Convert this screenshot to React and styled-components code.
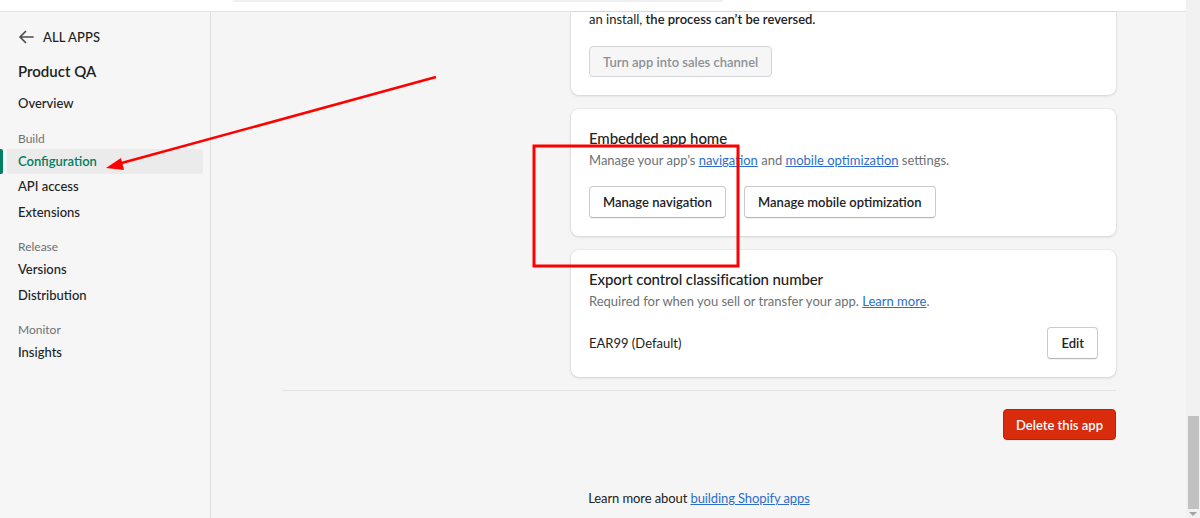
import React from 'react'
import styled, { createGlobalStyle, css } from 'styled-components'

const GlobalStyle = createGlobalStyle`
  html, body {
    margin: 0;
    padding: 0;
    overflow: hidden;
    background: #f5f5f5;
  }
  body {
    font-family: Lato, "Noto Sans", "Liberation Sans", sans-serif;
    color: #202223;
    -webkit-font-smoothing: antialiased;
  }
`

const Frame = styled.div`
  position: relative;
  display: flex;
  width: 1200px;
  height: 518px;
  overflow: hidden;
`

const Page = styled.div`
  flex: 1;
  display: flex;
  flex-direction: column;
  min-width: 0;
`

const Header = styled.header`
  height: 11px;
  background: #fff;
  border-bottom: 1px solid #e3e3e3;
  display: flex;
  padding-left: 233px;
`

const SearchBox = styled.div`
  width: 490px;
  height: 2px;
  background: #efefef;
  border-radius: 0 0 4px 4px;
`

const Body = styled.div`
  flex: 1;
  display: flex;
  min-height: 0;
`

const Sidebar = styled.nav`
  width: 210px;
  flex-shrink: 0;
  background: #f6f6f6;
  border-right: 1px solid #dedfe1;
  padding-top: 15px;
`

const BackLink = styled.div`
  display: flex;
  align-items: center;
  gap: 9px;
  height: 20px;
  padding-left: 18px;
  font-size: 13px;
  font-weight: 500;
  letter-spacing: 0.1px;
  color: #202223;
`

const AppName = styled.div`
  height: 20px;
  line-height: 20px;
  margin: 14px 0 10px;
  padding-left: 18px;
  font-size: 15px;
  font-weight: 600;
`

const NavList = styled.div`
  margin: 0 7px;
  display: flex;
  flex-direction: column;
`

const NavHeading = styled.div`
  height: 20px;
  line-height: 20px;
  margin-top: 12px;
  padding-left: 11px;
  font-size: 12px;
  color: #6d7175;
`

const NavItem = styled.div`
  position: relative;
  height: 25.5px;
  line-height: 25.5px;
  padding-left: 11px;
  font-size: 13px;
  font-weight: 500;
  color: #202223;
  border-radius: 2px;

  ${(p) =>
    p.$active &&
    css`
      background: #ebebeb;
      color: #007f5f;
      font-weight: 600;

      &::before {
        content: '';
        position: absolute;
        left: -7px;
        top: 0;
        bottom: 0;
        width: 3px;
        background: #008060;
        border-radius: 0 2px 2px 0;
      }
    `}
`

const Main = styled.main`
  flex: 1;
  min-width: 0;
  padding: 0 70px 0 71px;
  display: flex;
  flex-direction: column;
`

const Layout = styled.div`
  display: grid;
  grid-template-columns: 289px 545px;
`

const Cards = styled.div`
  grid-column: 2;
  display: flex;
  flex-direction: column;
  gap: 14px;
`

const Card = styled.section`
  background: #fff;
  border-radius: ${(p) => (p.$cut ? '0 0 8px 8px' : '8px')};
  box-shadow: 0 0 0 1px rgba(63, 63, 68, 0.04), 0 1px 3px rgba(63, 63, 68, 0.16);
  padding: ${(p) => (p.$cut ? '0 18px 18px' : '19px 18px 18px')};
`

const CutText = styled.p`
  margin: 0;
  font-size: 13px;
  line-height: 15px;

  b {
    font-weight: 600;
  }
`

const CardTitle = styled.h2`
  margin: 0;
  font-size: 15px;
  line-height: 20px;
  font-weight: 500;
  letter-spacing: -0.1px;
  color: #202223;
`

const CardText = styled.p`
  margin: 2px 0 0;
  font-size: 13px;
  line-height: 20px;
  color: #6d7175;
`

const Link = styled.a`
  color: #2c6ecb;
  text-decoration: underline;
`

const Row = styled.div`
  display: flex;
  align-items: center;
  gap: 18px;
  margin-top: ${(p) => p.$mt || 16}px;
  ${(p) => p.$between && 'justify-content: space-between;'}
`

const Button = styled.button`
  font-family: inherit;
  height: ${(p) => p.$h || 32}px;
  padding: 0 13px;
  font-size: 13px;
  font-weight: 600;
  color: #202223;
  background: #fff;
  border: 1px solid #c9cccf;
  border-bottom-color: #b3b7ba;
  border-radius: 4px;
  box-shadow: 0 1px 0 rgba(0, 0, 0, 0.05);
  cursor: pointer;

  &:disabled {
    background: #f6f6f7;
    color: #8c9196;
    border-color: #d2d5d8;
    box-shadow: none;
  }
`

const DangerButton = styled(Button)`
  background: #d82c0d;
  color: #fff;
  border: 1px solid #bc2200;
  padding: 0 12px;
`

const ValueText = styled.span`
  font-size: 13px;
  color: #202223;
`

const Divider = styled.hr`
  margin: 13px 0 0;
  border: 0;
  border-top: 1px solid #e1e3e5;
`

const Actions = styled.div`
  display: flex;
  justify-content: flex-end;
  padding-top: 18px;
`

const Footer = styled.p`
  margin: 48px 0 0;
  text-align: center;
  font-size: 13px;
  line-height: 20px;
  letter-spacing: -0.1px;
  color: #202223;
`

const Scrollbar = styled.div`
  width: 14px;
  flex-shrink: 0;
  background: #f1f1f1;
  display: flex;
  flex-direction: column;
  justify-content: flex-end;
  align-items: center;
  padding-bottom: 2px;
`

const Thumb = styled.div`
  width: 11px;
  height: 93px;
  background: #c1c1c1;
  margin-bottom: 3px;
`

const ScrollArrow = styled.div`
  width: 0;
  height: 0;
  border-left: 4px solid transparent;
  border-right: 4px solid transparent;
  border-top: 4px solid #a3a3a3;
`

const Annotation = styled.svg`
  position: absolute;
  left: 0;
  top: 0;
  pointer-events: none;
`

function BackArrow() {
  return (
    <svg width="16" height="16" viewBox="0 0 16 16" fill="none">
      <path d="M15 8H2M7.5 2.5L2 8l5.5 5.5" stroke="#4a4d50" strokeWidth="1.7" strokeLinecap="round" strokeLinejoin="round" />
    </svg>
  )
}

const nav = [
  { items: ['Overview'] },
  { heading: 'Build', items: ['Configuration', 'API access', 'Extensions'] },
  { heading: 'Release', items: ['Versions', 'Distribution'] },
  { heading: 'Monitor', items: ['Insights'] },
]

function App() {
  return (
    <>
      <GlobalStyle />
      <Frame>
        <Page>
          <Header>
            <SearchBox />
          </Header>
          <Body>
            <Sidebar>
              <BackLink>
                <BackArrow />
                ALL APPS
              </BackLink>
              <AppName>Product QA</AppName>
              <NavList>
                {nav.map((group, i) => (
                  <React.Fragment key={i}>
                    {group.heading && <NavHeading>{group.heading}</NavHeading>}
                    {group.items.map((item) => (
                      <NavItem key={item} $active={item === 'Configuration'}>
                        {item}
                      </NavItem>
                    ))}
                  </React.Fragment>
                ))}
              </NavList>
            </Sidebar>
            <Main>
              <Layout>
                <Cards>
                  <Card $cut>
                    <CutText>
                      an install, <b>the process can’t be reversed.</b>
                    </CutText>
                    <Row $mt={19}>
                      <Button $h={31} disabled>
                        Turn app into sales channel
                      </Button>
                    </Row>
                  </Card>
                  <Card>
                    <CardTitle>Embedded app home</CardTitle>
                    <CardText>
                      Manage your app’s <Link>navigation</Link> and <Link>mobile optimization</Link> settings.
                    </CardText>
                    <Row>
                      <Button>Manage navigation</Button>
                      <Button>Manage mobile optimization</Button>
                    </Row>
                  </Card>
                  <Card>
                    <CardTitle>Export control classification number</CardTitle>
                    <CardText>
                      Required for when you sell or transfer your app. <Link>Learn more</Link>.
                    </CardText>
                    <Row $between>
                      <ValueText>EAR99 (Default)</ValueText>
                      <Button>Edit</Button>
                    </Row>
                  </Card>
                </Cards>
              </Layout>
              <Divider />
              <Actions>
                <DangerButton $h={31}>Delete this app</DangerButton>
              </Actions>
              <Footer>
                Learn more about <Link>building Shopify apps</Link>
              </Footer>
            </Main>
          </Body>
        </Page>
        <Scrollbar>
          <Thumb />
          <ScrollArrow />
        </Scrollbar>
        <Annotation width="1200" height="518" viewBox="0 0 1200 518">
          <line x1="436" y1="77" x2="118" y2="164" stroke="#f00" strokeWidth="2.6" />
          <polygon points="106,168 121,158 124,170" fill="#f00" />
          <rect x="534" y="146" width="204" height="120" fill="none" stroke="#f00" strokeWidth="3" />
        </Annotation>
      </Frame>
    </>
  )
}

export default App
